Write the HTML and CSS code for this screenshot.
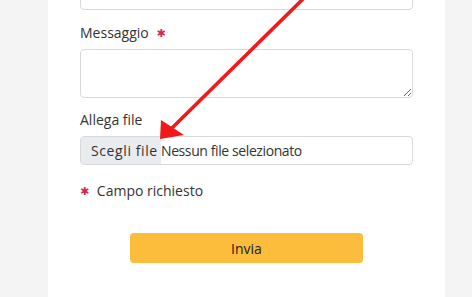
FILE: index.html
```html
<!DOCTYPE html>
<html lang="it">
<head>
<meta charset="utf-8">
<link rel="stylesheet" href="styles.css">
</head>
<body>
<div class="page">
  <form class="card">
    <div class="field field-top">
      <div class="input input-top"></div>
    </div>
    <div class="field">
      <label class="label label-first">Messaggio <span class="req">&#10033;</span></label>
      <textarea class="textarea"></textarea>
    </div>
    <div class="field">
      <label class="label">Allega file</label>
      <div class="input file">
        <span class="file-btn">Scegli file</span><span class="file-name">Nessun file selezionato</span>
      </div>
    </div>
    <p class="note"><span class="req">&#10033;</span> Campo richiesto</p>
    <div class="actions">
      <button type="button" class="btn">Invia</button>
    </div>
  </form>
</div>
<svg class="arrow" width="474" height="297" viewBox="0 0 474 297">
  <line x1="304" y1="-2" x2="170" y2="130" stroke="#f2191b" stroke-width="3.6" stroke-linecap="round"/>
  <polygon points="160,139 161,120 184,135" fill="#f2191b"/>
</svg>
</body>
</html>
```

FILE: styles.css
```css
html {
  background: #ffffff;
}
body {
  margin: 0 2px 0 0;
  min-height: 296px;
  background: #f4f4f4;
  font-family: "Open Sans", "DejaVu Sans", sans-serif;
  color: #333;
  overflow: hidden;
}
.page {
  padding-left: 48px;
  width: 397px;
}
.card {
  background: #ffffff;
  padding: 0 32px;
  min-height: 297px;
  box-sizing: border-box;
  display: flex;
  flex-direction: column;
}
.field {
  display: flex;
  flex-direction: column;
}
.field-top {
  margin-top: -30px;
}
.input {
  border: 1px solid #d9d9d9;
  border-radius: 4px;
  box-sizing: border-box;
}
.input-top {
  height: 40px;
}
.label {
  font-size: 14px;
  line-height: 20px;
  margin-top: 12px;
  margin-bottom: 6px;
  color: #333;
}
.label.label-first {
  margin-top: 13px;
}
.req {
  color: #d6294f;
  font-size: 11px;
  margin-left: 4px;
  vertical-align: 1px;
}
.textarea {
  height: 49px;
  border: 1px solid #d9d9d9;
  border-radius: 4px;
  box-sizing: border-box;
  resize: vertical;
  margin: 0;
  font: inherit;
}
.file {
  height: 29px;
  display: flex;
  align-items: stretch;
  overflow: hidden;
  font-size: 14px;
  color: #333;
}
.file-btn {
  background: #e9ecef;
  width: 80px;
  flex: none;
  padding-left: 10px;
  box-sizing: border-box;
  letter-spacing: 0.6px;
  display: flex;
  align-items: center;
}
.file-name {
  display: flex;
  align-items: center;
  letter-spacing: -0.4px;
}
.note {
  margin: 16px 0 0;
  font-size: 14px;
  line-height: 20px;
  color: #333;
}
.note .req {
  margin-left: 0;
  margin-right: 4px;
}
.actions {
  display: flex;
  justify-content: center;
  margin-top: 32px;
}
.btn {
  width: 233px;
  height: 30px;
  background: #fcbc3c;
  border: none;
  border-radius: 4px;
  font-family: "Open Sans", "DejaVu Sans", sans-serif;
  font-size: 14px;
  color: #222;
  padding: 0;
}
.arrow {
  position: absolute;
  top: 0;
  left: 0;
  pointer-events: none;
}
```
